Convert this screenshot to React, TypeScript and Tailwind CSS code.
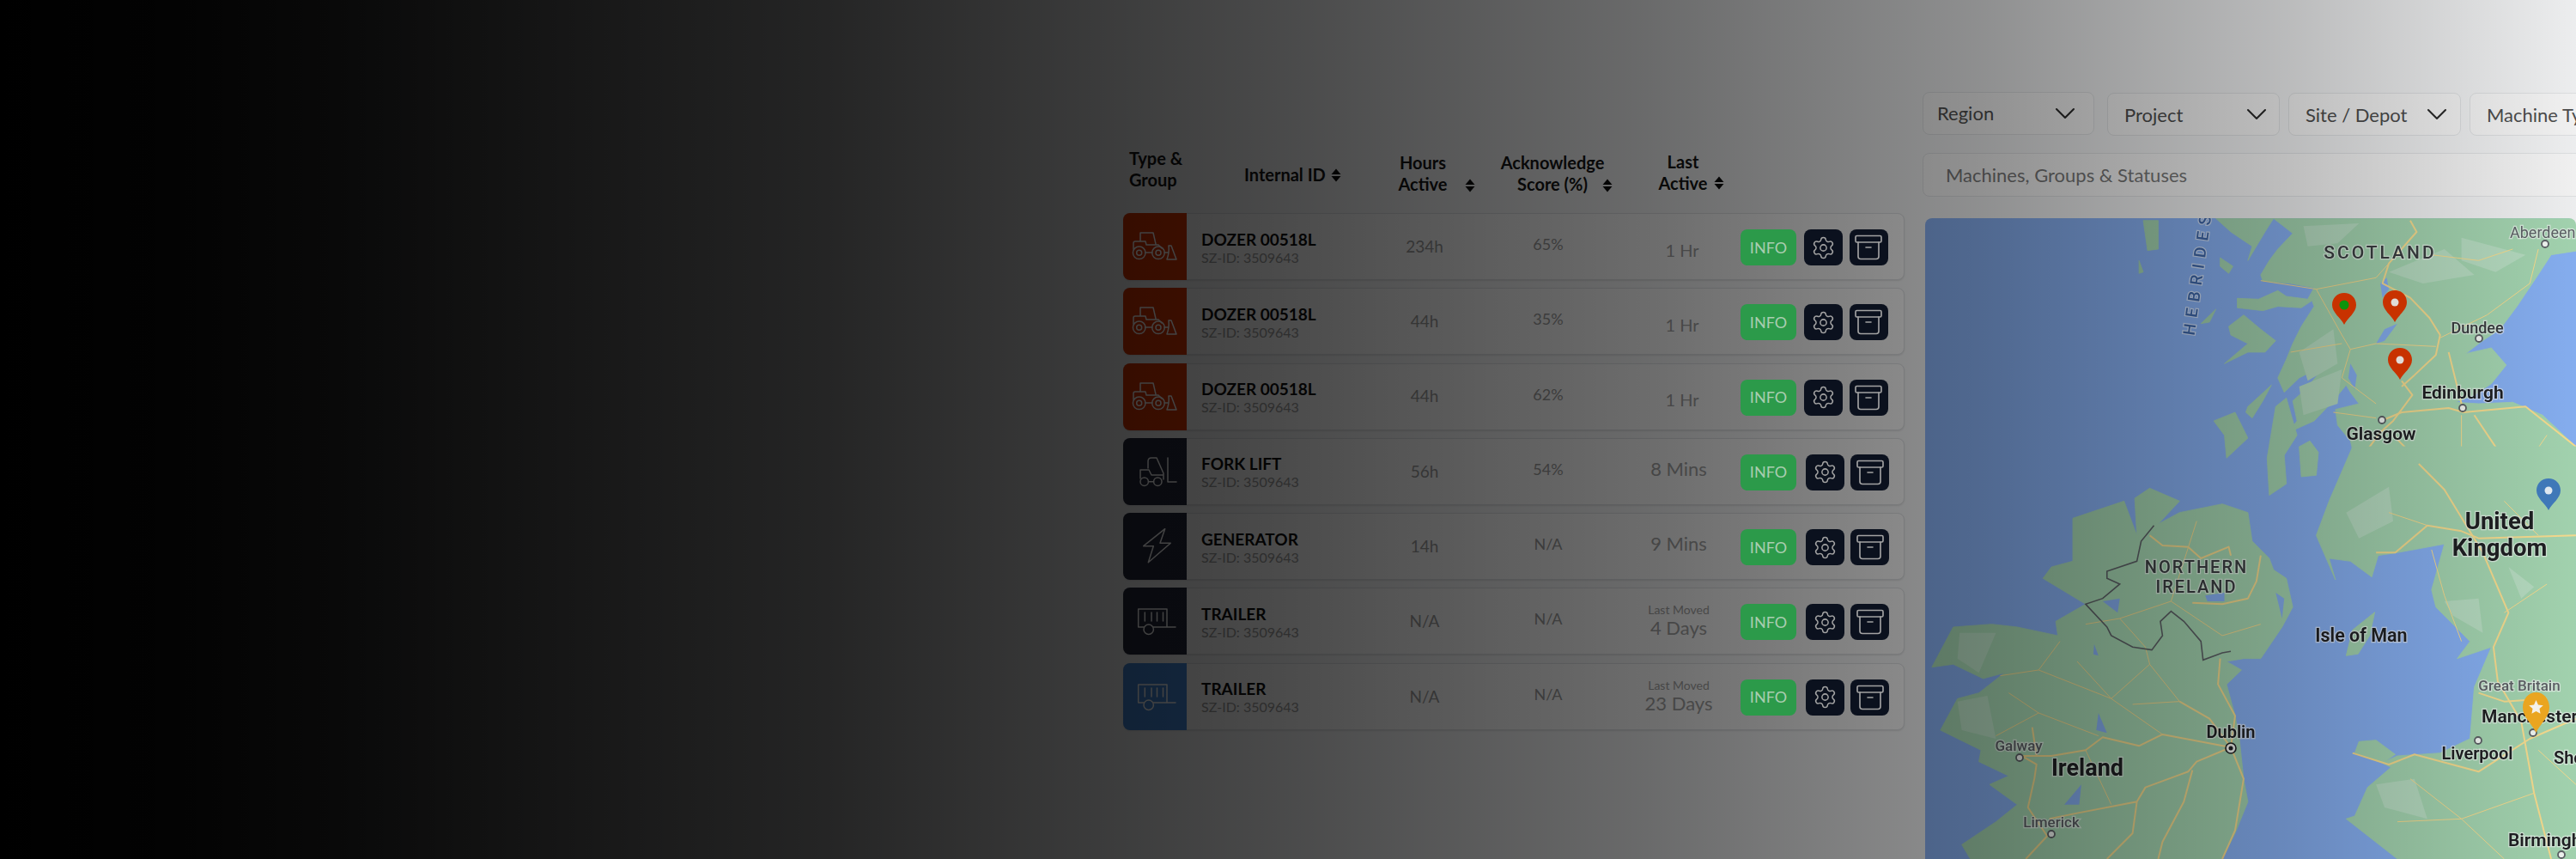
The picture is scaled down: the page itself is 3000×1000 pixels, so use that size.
import React from "react";
import { Settings, Archive, ChevronDown } from "lucide-react";

function Sort({ className }: { className: string }) {
  return (
    <svg viewBox="0 0 12 16" className={className} fill="#0d0d0d">
      <path d="M6 0.5 L11.5 7 H0.5 Z" />
      <path d="M6 15.5 L11.5 9 H0.5 Z" />
    </svg>
  );
}

function Dozer() {
  return (
    <g>
      <circle cx="18.7" cy="46.3" r="7.3" />
      <circle cx="18.7" cy="46.3" r="3" />
      <circle cx="41" cy="46.3" r="7.3" />
      <circle cx="41" cy="46.3" r="3" />
      <path d="M20 33 V23 H35 L38 36 M12 42 V35 Q12 33 14 33 H26 L27 37 H41 L45 41 M25.5 46 H34 M48 46 H53 M53 38 H56 L62 54 H51 Q54 46 53 38 Z" />
    </g>
  );
}
function Fork() {
  return (
    <g>
      <circle cx="24.7" cy="50.7" r="4.7" />
      <circle cx="40.3" cy="50.7" r="4.7" />
      <path d="M29 35 V27 Q29 23 33 23 H39 L47 41 V48 M20 47 V37 H30 L33 43 H47 M29.5 50.7 H35.5 M52 23 V51 H62" />
    </g>
  );
}
function Bolt() {
  return <path d="M48.7 18.7 L23.7 38.7 H35.3 L29.3 57.7 L55.3 35.3 H43 Z" />;
}
function Trailer() {
  return (
    <g>
      <circle cx="29.7" cy="48.7" r="5.7" />
      <path d="M24 46 H17.7 V25 H51 V46 M35.3 46 H61 M25.3 29 V39 M33 29 V39 M39.5 29 V39 M46.5 29 V39" />
    </g>
  );
}

type Row = {
  name: string;
  hours: string;
  score: string;
  last: string;
  moved?: boolean;
  box: string;
  stroke: string;
  icon: "dozer" | "fork" | "bolt" | "trailer";
  shift: boolean;
};

const rows: Row[] = [
  { name: "DOZER 00518L", hours: "234h", score: "65%", last: "1 Hr", box: "bg-[#d93400]", stroke: "#ffffff", icon: "dozer", shift: false },
  { name: "DOZER 00518L", hours: "44h", score: "35%", last: "1 Hr", box: "bg-[#d93400]", stroke: "#ffffff", icon: "dozer", shift: false },
  { name: "DOZER 00518L", hours: "44h", score: "62%", last: "1 Hr", box: "bg-[#d93400]", stroke: "#ffffff", icon: "dozer", shift: false },
  { name: "FORK LIFT", hours: "56h", score: "54%", last: "8 Mins", box: "bg-[#23273a]", stroke: "#ffffff", icon: "fork", shift: true },
  { name: "GENERATOR", hours: "14h", score: "N/A", last: "9 Mins", box: "bg-[#23273a]", stroke: "#ffffff", icon: "bolt", shift: true },
  { name: "TRAILER", hours: "N/A", score: "N/A", last: "4 Days", moved: true, box: "bg-[#23273a]", stroke: "#ffffff", icon: "trailer", shift: true },
  { name: "TRAILER", hours: "N/A", score: "N/A", last: "23 Days", moved: true, box: "bg-[#4387d8]", stroke: "#ffffff", icon: "trailer", shift: true },
];

function TableRow({ r }: { r: Row }) {
  return (
    <div className="flex h-[78px] items-center rounded-lg border border-[#dfe1e4] bg-[#fbfbfb] shadow-[0_1px_2px_rgba(0,0,0,0.1)]">
      <div className={`-ml-px h-[78px] w-[74px] shrink-0 rounded-l-lg ${r.box}`}>
        <svg viewBox="0 0 74 78" className="h-[78px] w-[74px]" fill="none" stroke={r.stroke} strokeWidth="1.5" strokeLinejoin="round" strokeLinecap="round">
          {r.icon === "dozer" && <Dozer />}
          {r.icon === "fork" && <Fork />}
          {r.icon === "bolt" && <Bolt />}
          {r.icon === "trailer" && <Trailer />}
        </svg>
      </div>
      <div className="mt-[3px] w-[208px] shrink-0 pl-[17px]">
        <div className="text-[19px] font-bold leading-[21px] text-[#0d0d0d]">{r.name}</div>
        <div className="text-[16px] leading-[21px] text-[#9a9a9a]">SZ-ID: 3509643</div>
      </div>
      <div className="w-[138px] shrink-0 text-center text-[19px] text-[#989898]">{r.hours}</div>
      <div className="mb-[5px] w-[150px] shrink-0 text-center text-[18px] text-[#989898]">{r.score}</div>
      {r.moved ? (
        <div className="w-[149px] shrink-0 pl-[5px] text-center text-[#a0a0a0]">
          <div className="text-[14px] leading-[16px]">Last Moved</div>
          <div className="text-[22px] leading-[26px]">{r.last}</div>
        </div>
      ) : r.shift ? (
        <div className="mb-[7px] w-[149px] shrink-0 pl-[5px] text-center text-[22px] text-[#a0a0a0]">{r.last}</div>
      ) : (
        <div className="mt-[7px] w-[149px] shrink-0 pl-[13px] text-center text-[20px] text-[#a0a0a0]">{r.last}</div>
      )}
      <div className="relative z-20 ml-auto mr-[19px] mt-[2px] flex items-center">
        <div className="flex h-[42px] w-[65px] items-center justify-center rounded-lg bg-[#2c9a4a] text-[18px] text-[#a9cdb0]">INFO</div>
        <div className={`flex h-[42px] w-[45px] items-center justify-center rounded-lg bg-[#0b111e] ${r.shift ? "ml-[10.5px]" : "ml-[9px]"}`}>
          <Settings size={29} strokeWidth={1.25} color="#a3a3a3" />
        </div>
        <div className="ml-[7.5px] flex h-[42px] w-[45px] items-center justify-center rounded-lg bg-[#0b111e]">
          <Archive size={36} strokeWidth={1.1} color="#a3a3a3" />
        </div>
      </div>
    </div>
  );
}

function Pin({ className, fill, children }: { className: string; fill: string; children: React.ReactNode }) {
  return (
    <svg viewBox="0 0 28 37" preserveAspectRatio="none" className={className}>
      <path d="M14 0 C6 0 0 6 0 14 C0 23 10 29 14 37 C18 29 28 23 28 14 C28 6 22 0 14 0 Z" fill={fill} />
      {children}
    </svg>
  );
}

function Filter({ label, className }: { label: string; className: string }) {
  return (
    <div className={`flex h-[50px] shrink-0 items-center justify-between whitespace-nowrap rounded-lg border border-[#e4e6e8] bg-[#fafafa] text-[22px] text-[#4f4f4f] ${className}`}>
      <span>{label}</span>
      <ChevronDown size={40} strokeWidth={1.25} color="#2b2b2b" />
    </div>
  );
}

function MapPicture() {
  const land = "#a8dab5";
  const water = "#8ab4f8";
  const road = "#fde293";
  const city = "rgba(255,255,255,0.9)";
  const ring = (cx: number, cy: number) => <circle cx={cx} cy={cy} r="4" fill={city} stroke="#5f6368" strokeWidth="1.8" />;
  const halo = { paintOrder: "stroke" as const, stroke: "rgba(255,255,255,0.6)", strokeWidth: 2.5 };
  const heavy = "#202124";
  const mid = "#3c4043";
  const soft = "#5f6368";
  return (
    <svg viewBox="2242 254 758 746" className="block h-[746px] w-[758px] font-['Roboto',sans-serif] blur-[0.7px]" style={{ background: water }}>
      <g transform="translate(2220 90) scale(0.4974 0.3333)">
        <g fill={land} stroke={land} strokeWidth="2" strokeLinejoin="round">
          <path d="M860 493 L905 545 L870 600 L850 640 L830 690 L835 712 L900 720 L955 735 L940 775 L890 765 L870 745 L825 775 L775 772 L775 805 L835 815 L870 800 L925 805 L950 780 L955 800 L925 870 L905 930 L890 985 L870 1050 L885 1100 L920 1050 L985 1000 L935 1090 L905 1130 L915 1200 L900 1230 L880 1250 L955 1200 L1000 1130 L1030 1075 L1040 1100 L1060 1140 L1005 1160 L1010 1215 L1040 1270 L1050 1330 L1040 1400 L1568 1400 L1568 1290 L1490 1180 L1420 1135 L1340 1140 L1285 1135 L1330 1110 L1370 1070 L1405 1005 L1370 945 L1310 965 L1345 925 L1390 880 L1430 800 L1475 700 L1510 620 L1640 590 L1640 493 Z" />
          <path d="M725 493 L860 493 L840 540 L800 640 L810 590 L780 560 L760 540 Z" />
          <path d="M555 500 L590 500 L590 600 L565 605 Z" />
          <path d="M545 640 L555 680 L545 685 Z" />
          <path d="M735 630 L765 660 L755 685 L735 660 Z" />
          <path d="M690 860 L725 810 L710 855 Z" />
          <path d="M755 870 L790 830 L830 880 L865 920 L840 960 L800 960 L745 1000 L800 930 L760 900 Z" />
          <path d="M800 1150 L855 1075 L835 1130 L810 1190 L795 1170 Z" />
          <path d="M720 1200 L770 1170 L800 1260 L750 1330 L745 1250 Z" />
          <path d="M865 1150 L890 1120 L915 1250 L885 1320 L890 1420 L850 1460 L845 1330 Z" />
          <path d="M920 1290 L945 1270 L965 1310 L960 1390 L925 1395 Z" />
        </g>
        <g fill="#bbe2c6">
          <path d="M930 520 L1060 510 L1010 580 L940 590 Z" />
          <path d="M1130 680 L1260 600 L1330 690 L1210 720 Z" />
          <path d="M1300 560 L1450 620 L1380 680 L1300 640 Z" />
          <path d="M920 960 L1000 880 L1010 1000 L940 1060 Z" />
          <path d="M920 1080 L1020 1020 L1010 1140 L930 1180 Z" />
        </g>
        <g fill={water}>
          <path d="M1110 720 L1125 700 L1130 740 L1115 770 Z" />
          <path d="M1120 880 L1150 860 L1120 920 L1100 930 Z" />
          <path d="M1040 1000 L1055 1040 L1050 1090 L1035 1050 Z" />
        </g>
        <g fill="none" stroke={road} strokeWidth="2" strokeLinejoin="round">
          <path vectorEffect="non-scaling-stroke" d="M1180 500 L1195 540 L1130 650 L1115 720 L1180 770 L1225 840 L1250 900 L1240 970 L1190 1040 L1160 1080" />
          <path vectorEffect="non-scaling-stroke" d="M1120 1195 L1160 1170 L1270 1155 L1305 1170 L1450 1150 L1568 1290" />
          <path vectorEffect="non-scaling-stroke" d="M1305 1170 L1270 960 M1160 1060 L1185 1110 L1140 1200 L1110 1240 L1080 1300 M1140 1250 L1200 1340 L1215 1380 M1330 1180 L1420 1380" />
          <path vectorEffect="non-scaling-stroke" strokeWidth="1" d="M830 710 L960 740 L1100 700 L1130 650 M960 740 L1020 900 L1040 950 L1100 930 L1240 940 M1040 950 L1020 1050 L1100 1140 M1480 600 L1460 720 L1360 830 L1250 910 M1300 1180 L1300 1380 M1420 600 L1340 640 L1230 620 M1000 1170 L1100 1190 M900 960 L1020 930 M1500 1250 L1440 1380" />
        </g>
      </g>
      <g transform="translate(2220 540) scale(0.4974 0.3333)">
        <g fill={land} stroke={land} strokeWidth="2" strokeLinejoin="round">
          <path d="M1045 -60 L990 130 L960 250 L1005 405 L990 330 L1040 340 L1090 395 L1105 320 L1150 310 L1260 280 L1230 440 L1240 500 L1320 620 L1290 680 L1370 640 L1330 780 L1320 960 L1250 1010 L1150 1020 L1120 1040 L1145 1015 L1100 965 L1060 970 L1050 1010 L1115 1045 L1135 1060 L1080 1130 L1050 1230 L1030 1240 L1150 1380 L1568 1380 L1568 -60 Z" />
          <path d="M570 85 L640 130 L590 210 L640 170 L740 140 L800 170 L810 270 L850 330 L860 370 L890 400 L905 500 L880 570 L830 680 L790 680 L750 690 L785 720 L750 770 L770 880 L780 960 L790 1100 L800 1180 L770 1290 L740 1380 L150 1380 L130 1330 L210 1250 L260 1190 L195 1120 L240 1090 L170 1040 L175 1000 L80 930 L120 820 L170 800 L230 730 L180 750 L110 700 L60 710 L110 570 L200 560 L260 570 L355 600 L350 550 L420 490 L320 400 L340 360 L390 340 L390 190 L510 130 L540 250 L535 120 Z" />
          <path d="M1030 670 L1045 580 L1097 518 L1085 600 L1058 664 Z" />
        </g>
        <g fill="#bbe2c6">
          <path d="M1030 170 L1130 80 L1140 200 L1060 260 Z" />
          <path d="M1260 480 L1340 470 L1350 590 L1280 530 Z" />
          <path d="M1410 360 L1470 430 L1440 470 Z" />
          <path d="M1100 1120 L1190 1100 L1220 1240 L1120 1200 Z" />
          <path d="M125 590 L210 590 L170 730 L120 680 Z" />
          <path d="M120 830 L190 810 L210 960 L130 930 Z" />
        </g>
        <g fill={water}>
          <path d="M700 460 L745 450 L745 480 L705 480 Z" />
          <path d="M460 480 L500 470 L495 520 Z" />
          <path d="M450 870 L470 940 L445 930 Z" />
          <path d="M370 1190 L410 1120 L405 1190 Z" />
          <path d="M865 450 L885 470 L880 540 Z" />
          <path d="M440 630 L450 670 L438 665 Z" />
        </g>
        <g fill="none" stroke={road} strokeWidth="2" strokeLinejoin="round">
          <path vectorEffect="non-scaling-stroke" d="M1200 0 L1260 90 L1350 310 L1410 520 L1375 640 L1385 760 L1440 900 L1470 1150 L1510 1380" />
          <path vectorEffect="non-scaling-stroke" d="M1100 310 L1145 310 L1220 215 L1300 235 L1340 260 L1568 250 M1045 1010 L1130 1050 L1190 1015 L1340 1075 L1460 960 L1568 890 M1340 800 L1400 830 L1500 820" />
          <path vectorEffect="non-scaling-stroke" d="M735 680 L730 770 L770 880 L760 990 L790 1100 L770 1280 L740 1380 M760 990 L600 945 L545 985 L460 955 L420 1000 L340 1020 L270 1020 L305 1050 L300 1100 L285 1200 L330 1300 L280 1380 M295 920 L305 1020 M760 990 L680 1040 L660 1075 L560 1130 L540 1180 L400 1220 L335 1240 M670 1070 L650 1180 L600 1320 L590 1380 M540 1180 L530 1290 L470 1380 M640 830 L710 890 L760 990 M570 250 L600 285 L660 290 L690 330 L755 290 L760 320 M670 485 L740 490 L800 470 L820 410 L830 320" />
          <path vectorEffect="non-scaling-stroke" strokeWidth="1" d="M360 620 L310 720 L220 740 M310 720 L480 820 L600 945 M480 820 L570 700 L640 830 M400 690 L480 820 M570 700 L560 640 L500 540 L420 560 M500 540 L620 480 L680 200 M830 560 L740 600 L620 480 M1230 300 L1260 460 L1300 620 M1500 420 L1400 520 M1180 1100 L1300 1240 L1470 1150 M1150 1250 L1300 1240 L1400 1380 M210 950 L310 870 L450 950 M240 800 L310 870 M420 1000 L480 1190 M530 840 L640 830 M1480 1000 L1568 1120 M1400 130 L1480 250 M1130 170 L1220 215" />
        </g>
        <path fill="none" stroke={soft} strokeWidth="1.6" vectorEffect="non-scaling-stroke" d="M580 215 L550 270 L540 340 L470 375 L470 400 L500 420 L460 470 L420 490 L470 570 L480 600 L530 640 L575 650 L600 600 L595 550 L620 515 L650 550 L690 620 L695 685 L740 660 L760 655" />
      </g>

      {ring(2964, 284)}
      {ring(2887, 394)}
      {ring(2868, 475)}
      {ring(2774, 489)}
      {ring(2352, 882)}
      {ring(2389, 971)}
      {ring(2886, 862)}
      {ring(2950, 853)}
      {ring(2983, 995)}
      <circle cx="2598" cy="871" r="6" fill={city} stroke={heavy} strokeWidth="1.6" />
      <circle cx="2598" cy="871" r="2.5" fill={heavy} />

      <g dominantBaseline="central" style={halo} fontWeight="700">
        <text x="2772" y="294" textAnchor="middle" fontSize="21" fontWeight="500" letterSpacing="3" fill={mid}>SCOTLAND</text>
        <text x="2558" y="660" textAnchor="middle" fontSize="20" fontWeight="500" letterSpacing="2" fill={mid}>NORTHERN</text>
        <text x="2558" y="683" textAnchor="middle" fontSize="20" fontWeight="500" letterSpacing="2" fill={mid}>IRELAND</text>
        <text x="2923" y="270" fontSize="18" fontWeight="400" fill={soft}>Aberdeen</text>
        <text x="2885" y="381" textAnchor="middle" fontSize="18" fontWeight="500" fill={mid}>Dundee</text>
        <text x="2868" y="457" textAnchor="middle" fontSize="21" fontWeight="600" fill={heavy}>Edinburgh</text>
        <text x="2773" y="505" textAnchor="middle" fontSize="21" fontWeight="600" fill={heavy}>Glasgow</text>
        <text x="2911" y="606" textAnchor="middle" fontSize="27.5" fill={heavy}>United</text>
        <text x="2911" y="637" textAnchor="middle" fontSize="27.5" fill={heavy}>Kingdom</text>
        <text x="2750" y="739" textAnchor="middle" fontSize="21.5" fontWeight="600" fill={heavy}>Isle of Man</text>
        <text x="2934" y="798" textAnchor="middle" fontSize="17" fontWeight="500" fill={soft}>Great Britain</text>
        <text x="2890" y="834" fontSize="21" fontWeight="600" fill={heavy}>Manchester</text>
        <text x="2885" y="877" textAnchor="middle" fontSize="20" fontWeight="600" fill={heavy}>Liverpool</text>
        <text x="2974" y="882" fontSize="20" fontWeight="600" fill={heavy}>Sheffield</text>
        <text x="2921" y="978" fontSize="21" fontWeight="600" fill={heavy}>Birmingham</text>
        <text x="2598" y="852" textAnchor="middle" fontSize="20" fontWeight="600" fill={heavy}>Dublin</text>
        <text x="2351" y="868" textAnchor="middle" fontSize="17" fontWeight="500" fill={soft}>Galway</text>
        <text x="2431" y="894" textAnchor="middle" fontSize="27" fill={heavy}>Ireland</text>
        <text x="2389" y="957" textAnchor="middle" fontSize="17" fontWeight="500" fill={soft}>Limerick</text>
        <text transform="translate(2549 390) rotate(-82)" fontSize="19" fontWeight="500" letterSpacing="7.5" fill="#3f69ad">HEBRIDES</text>
      </g>
    </svg>
  );
}

export default function App() {
  return (
    <div className="relative flex h-[1000px] w-[3000px] items-start overflow-hidden bg-[#f6f7f8] pl-[1308px] font-['Lato','Noto_Sans',sans-serif]">
      <div className="w-[910px] shrink-0 pt-[170px]">
        <div className="flex h-[78px] items-start text-[20px] font-bold leading-[25px] text-[#141414]">
          <div className="mt-[2px] w-[141px] shrink-0 pl-[7px]">
            Type &amp;<br />Group
          </div>
          <div className="mt-[21px] flex w-[141px] shrink-0 items-center gap-[6px]">
            <span>Internal ID</span>
            <Sort className="h-[16px] w-[12px]" />
          </div>
          <div className="mt-[7px] flex w-[138px] shrink-0 items-end pl-[37px]">
            <span className="w-[60px] text-center">Hours<br />Active</span>
            <Sort className="mb-[3px] ml-[19px] h-[16px] w-[12px]" />
          </div>
          <div className="mt-[7px] flex w-[150px] shrink-0 items-end pl-[17px]">
            <span className="w-[126px] text-center">Acknowledge<br />Score (%)</span>
            <Sort className="mb-[3px] -ml-[5px] h-[16px] w-[12px]" />
          </div>
          <div className="mt-[6px] flex items-end pl-[52px]">
            <span className="w-[60px] text-center">Last<br />Active</span>
            <Sort className="mb-[5px] ml-[6px] h-[16px] w-[12px]" />
          </div>
        </div>
        <div className="flex flex-col gap-[9.3px]">
          {rows.map((r, i) => (
            <TableRow key={i} r={r} />
          ))}
        </div>
      </div>

      <div className="ml-[21px] w-[900px] shrink-0 pt-[107px]">
        <div className="flex items-start">
          <Filter label="Region" className="w-[200px] pl-[16px] pr-[13px] [&>span]:-translate-y-px" />
          <Filter label="Project" className="ml-[15px] mt-px w-[201px] pl-[19px] pr-[6px]" />
          <Filter label="Site / Depot" className="ml-[10px] mt-px w-[201px] pl-[19px] pr-[7px]" />
          <Filter label="Machine Type" className="ml-[10px] mt-px w-[201px] pl-[19px] pr-[7px]" />
        </div>
        <div className="mt-[20px] flex h-[51px] items-center rounded-lg border border-[#e4e6e8] bg-[#fafafa] pl-[26px] text-[22px] text-[#7a7a7a]">
          Machines, Groups &amp; Statuses
        </div>
        <div className="relative ml-[3px] mt-[25px] h-[746px] w-[758px] overflow-hidden rounded-t-lg">
          <MapPicture />
          <Pin className="absolute left-[474px] top-[87px] z-20 h-[37px] w-[28px]" fill="#c83200">
            <circle cx="14" cy="14" r="5.5" fill="#0c930c" />
          </Pin>
          <Pin className="absolute left-[533px] top-[84px] z-20 h-[37px] w-[28px]" fill="#c83200">
            <circle cx="14" cy="14" r="4.5" fill="#e0dcd8" />
          </Pin>
          <Pin className="absolute left-[539px] top-[151px] z-20 h-[37px] w-[28px]" fill="#c83200">
            <circle cx="14" cy="14" r="4.5" fill="#e0dcd8" />
          </Pin>
          <Pin className="absolute left-[712px] top-[303px] z-20 h-[37px] w-[28px]" fill="#3f78b8">
            <circle cx="14" cy="14" r="4.5" fill="#dfe8f0" />
          </Pin>
          <Pin className="absolute left-[696px] top-[552px] z-20 h-[47px] w-[31px]" fill="#eaa520">
            <path d="M14 7 L16.2 11.5 L21.5 12 L17.6 15 L18.6 19.5 L14 17.3 L9.4 19.5 L10.4 15 L6.5 12 L11.8 11.5 Z" fill="#f4f1ea" />
          </Pin>
        </div>
      </div>

      <div className="pointer-events-none absolute inset-0 z-10 bg-[linear-gradient(90deg,rgba(0,0,0,1)_0%,rgba(0,0,0,0.99)_7%,rgba(0,0,0,0.965)_13%,rgba(0,0,0,0.85)_32%,rgba(0,0,0,0.69)_51%,rgba(0,0,0,0.57)_64%,rgba(0,0,0,0.42)_77%,rgba(0,0,0,0.24)_89%,rgba(0,0,0,0.04)_100%)]" />
    </div>
  );
}
